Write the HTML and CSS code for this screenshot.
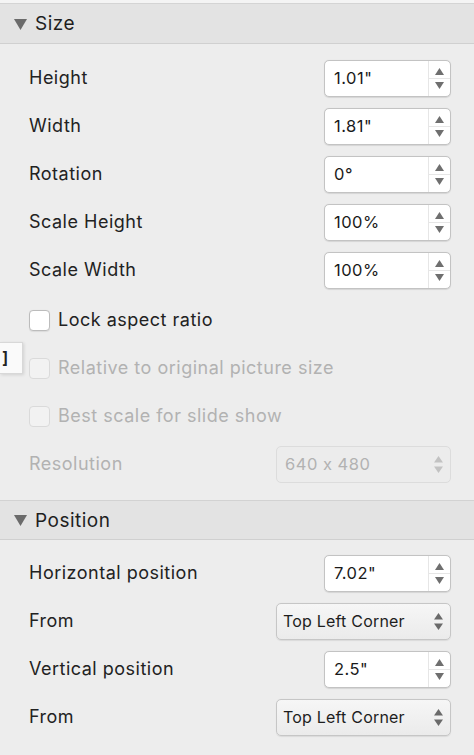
FILE: index.html
```html
<!DOCTYPE html>
<html>
<head>
<meta charset="utf-8">
<link rel="stylesheet" href="styles.css">
</head>
<body>
<div class="panel">
  <div class="topstrip"></div>
  <div class="section-head">
    <svg class="tri" width="13" height="11" viewBox="0 0 13 11"><polygon points="0,0 13,0 6.5,11" /></svg>
    <span>Size</span>
  </div>
  <div class="section-body size-body">
    <div class="row"><span class="label">Height</span>
      <div class="field"><span class="val">1.01"</span><div class="stepper"><div class="half"><svg width="9" height="7" viewBox="0 0 9 7"><polygon points="4.5,0 9,7 0,7"/></svg></div><div class="half"><svg width="9" height="7" viewBox="0 0 9 7"><polygon points="0,0 9,0 4.5,7"/></svg></div></div></div>
    </div>
    <div class="row"><span class="label">Width</span>
      <div class="field"><span class="val">1.81"</span><div class="stepper"><div class="half"><svg width="9" height="7" viewBox="0 0 9 7"><polygon points="4.5,0 9,7 0,7"/></svg></div><div class="half"><svg width="9" height="7" viewBox="0 0 9 7"><polygon points="0,0 9,0 4.5,7"/></svg></div></div></div>
    </div>
    <div class="row"><span class="label">Rotation</span>
      <div class="field"><span class="val">0°</span><div class="stepper"><div class="half"><svg width="9" height="7" viewBox="0 0 9 7"><polygon points="4.5,0 9,7 0,7"/></svg></div><div class="half"><svg width="9" height="7" viewBox="0 0 9 7"><polygon points="0,0 9,0 4.5,7"/></svg></div></div></div>
    </div>
    <div class="row"><span class="label">Scale Height</span>
      <div class="field"><span class="val">100%</span><div class="stepper"><div class="half"><svg width="9" height="7" viewBox="0 0 9 7"><polygon points="4.5,0 9,7 0,7"/></svg></div><div class="half"><svg width="9" height="7" viewBox="0 0 9 7"><polygon points="0,0 9,0 4.5,7"/></svg></div></div></div>
    </div>
    <div class="row"><span class="label">Scale Width</span>
      <div class="field"><span class="val">100%</span><div class="stepper"><div class="half"><svg width="9" height="7" viewBox="0 0 9 7"><polygon points="4.5,0 9,7 0,7"/></svg></div><div class="half"><svg width="9" height="7" viewBox="0 0 9 7"><polygon points="0,0 9,0 4.5,7"/></svg></div></div></div>
    </div>
    <div class="checks">
      <div class="row check-row"><span class="box"></span><span class="label">Lock aspect ratio</span></div>
      <div class="row check-row disabled"><span class="box"></span><span class="label">Relative to original picture size</span></div>
      <div class="row check-row disabled"><span class="box"></span><span class="label">Best scale for slide show</span></div>
    </div>
    <div class="row disabled"><span class="label">Resolution</span>
      <div class="popup"><span class="val">640 x 480</span><svg class="updown" width="9" height="17" viewBox="0 0 9 17"><polygon points="4.5,0 9,6.5 0,6.5"/><polygon points="0,10.5 9,10.5 4.5,17"/></svg></div>
    </div>
  </div>
  <div class="section-head pos-head">
    <svg class="tri" width="13" height="11" viewBox="0 0 13 11"><polygon points="0,0 13,0 6.5,11" /></svg>
    <span>Position</span>
  </div>
  <div class="section-body pos-body">
    <div class="row"><span class="label">Horizontal position</span>
      <div class="field"><span class="val">7.02"</span><div class="stepper"><div class="half"><svg width="9" height="7" viewBox="0 0 9 7"><polygon points="4.5,0 9,7 0,7"/></svg></div><div class="half"><svg width="9" height="7" viewBox="0 0 9 7"><polygon points="0,0 9,0 4.5,7"/></svg></div></div></div>
    </div>
    <div class="row"><span class="label">From</span>
      <div class="popup"><span class="val">Top Left Corner</span><svg class="updown" width="9" height="17" viewBox="0 0 9 17"><polygon points="4.5,0 9,6.5 0,6.5"/><polygon points="0,10.5 9,10.5 4.5,17"/></svg></div>
    </div>
    <div class="row"><span class="label">Vertical position</span>
      <div class="field"><span class="val">2.5"</span><div class="stepper"><div class="half"><svg width="9" height="7" viewBox="0 0 9 7"><polygon points="4.5,0 9,7 0,7"/></svg></div><div class="half"><svg width="9" height="7" viewBox="0 0 9 7"><polygon points="0,0 9,0 4.5,7"/></svg></div></div></div>
    </div>
    <div class="row"><span class="label">From</span>
      <div class="popup"><span class="val">Top Left Corner</span><svg class="updown" width="9" height="17" viewBox="0 0 9 17"><polygon points="4.5,0 9,6.5 0,6.5"/><polygon points="0,10.5 9,10.5 4.5,17"/></svg></div>
    </div>
  </div>
  <div class="side-tab">]</div>
</div>
</body>
</html>
```

FILE: styles.css
```css
html, body {
  margin: 0;
  padding: 0;
  background: #ececec;
}
body {
  font-family: Inter, "Noto Sans", "Liberation Sans", sans-serif;
  font-feature-settings: "calt" 0;
  color: #222;
  width: 474px;
  height: 755px;
  overflow: hidden;
}
.panel {
  position: relative;
  width: 474px;
  height: 755px;
  background: #ededed;
}
.topstrip {
  height: 3px;
  background: #f4f4f4;
  border-bottom: 1px solid #d4d4d4;
}
.section-head {
  height: 39px;
  background: #e3e3e3;
  border-bottom: 1px solid #d0d0d0;
  display: flex;
  align-items: center;
  padding-left: 14px;
  font-size: 19px;
  letter-spacing: 0.5px;
  color: #1e1e1e;
}
.section-head .tri {
  fill: #6b6b6b;
  margin-right: 8px;
  margin-top: 1px;
}
.pos-head {
  height: 38px;
  border-top: 1px solid #d2d2d2;
}
.section-body {
  display: flex;
  flex-direction: column;
}
.size-body {
  padding: 10px 0 12px;
}
.pos-body {
  padding: 9px 0 0;
}
.checks {
  padding-top: 2px;
  display: flex;
  flex-direction: column;
}
.row {
  height: 48px;
  display: flex;
  align-items: center;
  justify-content: space-between;
  padding: 0 23px 0 29px;
}
.label {
  font-size: 18px;
  letter-spacing: 0.5px;
  color: #222;
  margin-top: -2px;
}
.check-row {
  justify-content: flex-start;
}
.box {
  width: 19px;
  height: 19px;
  border: 1px solid #bcbcbc;
  border-radius: 4px;
  background: #fff;
  margin-right: 8px;
  box-shadow: 0 0.5px 1px rgba(0,0,0,0.08);
}
.disabled .label {
  color: #b2b2b2;
}
.disabled .box {
  background: #f2f2f2;
  border-color: #dadada;
  box-shadow: none;
}
.field {
  width: 125px;
  height: 35px;
  border: 1px solid #c3c3c3;
  border-radius: 5px;
  background: #fff;
  display: flex;
  align-items: center;
  justify-content: space-between;
  box-shadow: 0 0.5px 1px rgba(0,0,0,0.1);
}
.field .val {
  padding-left: 9px;
  font-size: 16.5px;
  letter-spacing: 0.5px;
  color: #1a1a1a;
}
.stepper {
  width: 22px;
  height: 100%;
  display: flex;
  flex-direction: column;
}
.stepper .half {
  flex: 1;
  display: flex;
  align-items: center;
  justify-content: center;
  border-left: 1px solid #e6e6e6;
}
.stepper .half:first-child {
  border-bottom: 1px solid #e6e6e6;
  align-items: flex-end;
  padding-bottom: 3px;
}
.stepper .half:last-child {
  align-items: flex-start;
  padding-top: 3px;
}
.stepper svg {
  fill: #6f6f6f;
  display: block;
}
.popup {
  width: 173px;
  height: 35px;
  border: 1px solid #c6c6c6;
  border-radius: 5px;
  background: linear-gradient(#f6f6f6, #ebebeb);
  display: flex;
  align-items: center;
  justify-content: space-between;
  box-shadow: 0 0.5px 1px rgba(0,0,0,0.08);
}
.popup .val {
  padding-left: 6px;
  font-size: 16px;
  letter-spacing: 0.2px;
  color: #1e1e1e;
}
.popup .updown {
  fill: #6a6a6a;
  margin-right: 7px;
}
.disabled .popup {
  background: #ececec;
  border-color: #dcdcdc;
  box-shadow: none;
}
.disabled .popup .val {
  color: #b2b2b2;
  font-size: 16.5px;
  letter-spacing: 0.5px;
  padding-left: 8px;
}
.disabled .popup .updown {
  fill: #c2c2c2;
}
.side-tab {
  position: absolute;
  left: 0;
  top: 342px;
  width: 20px;
  height: 30px;
  background: #fafafa;
  border: 1px solid #d8d8d8;
  border-left: none;
  box-shadow: 1px 1px 3px rgba(0,0,0,0.12);
  font-size: 17px;
  font-weight: 600;
  line-height: 30px;
  padding-left: 2px;
  box-sizing: content-box;
  color: #222;
}
```
